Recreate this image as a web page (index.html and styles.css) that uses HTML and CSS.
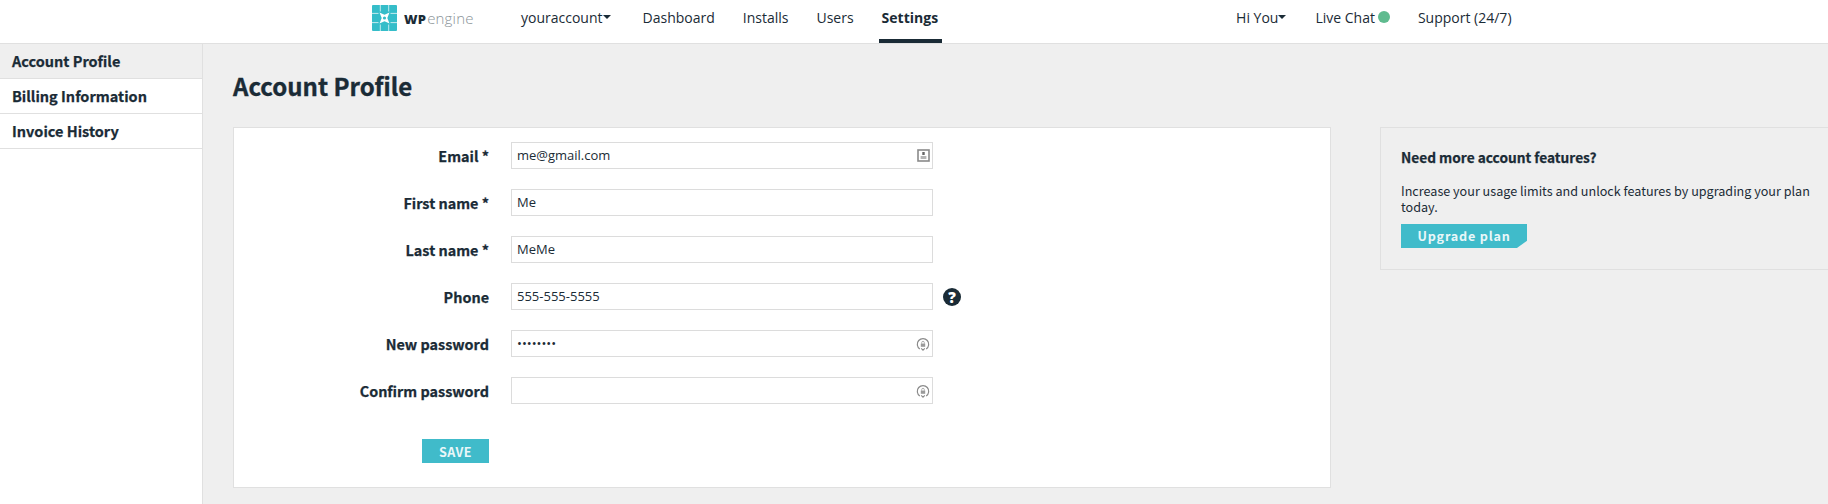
FILE: index.html
```html
<!DOCTYPE html>
<html lang="en">
<head>
<meta charset="utf-8">
<title>Account Profile</title>
<link rel="stylesheet" href="styles.css">
</head>
<body>
<header class="topbar">
  <a class="logo" href="#">
    <svg class="logo-mark" viewBox="0 0 25 26" width="25" height="26">
      <rect x="0" y="0" width="25" height="26" rx="1" fill="#35bdc9"/>
      <path d="M8.300 0v6.500M16.700 0v6.500M8.300 19.500v6.500M16.700 19.500v6.500M0 8.400h6.500M18.500 8.400h6.500M0 17.600h6.500M18.500 17.600h6.500" stroke="#c4ebef" stroke-width="1"/>
      <path d="M7.500 7.500l5 2.200 5-2.200-2.200 5.500 2.200 5.500-5-2.200-5 2.200 2.200-5.500z" fill="#fff"/>
      <circle cx="12.500" cy="13" r="1.600" fill="#35bdc9"/>
    </svg>
    <span class="logo-text"><b>WP</b>engine</span>
  </a>
  <nav class="nav-main">
    <a href="#" class="nav-link">youraccount<i class="caret"></i></a>
    <a href="#" class="nav-link">Dashboard</a>
    <a href="#" class="nav-link">Installs</a>
    <a href="#" class="nav-link">Users</a>
    <a href="#" class="nav-link active">Settings</a>
  </nav>
  <nav class="nav-side">
    <a href="#" class="nav-link">Hi You<i class="caret"></i></a>
    <a href="#" class="nav-link">Live Chat<i class="dot"></i></a>
    <a href="#" class="nav-link">Support (24/7)</a>
  </nav>
</header>
<div class="layout">
  <aside class="sidebar">
    <a href="#" class="side-item current">Account Profile</a>
    <a href="#" class="side-item">Billing Information</a>
    <a href="#" class="side-item">Invoice History</a>
  </aside>
  <main class="content">
    <h1 class="page-title">Account Profile</h1>
    <div class="columns">
      <form class="card">
        <div class="row">
          <label class="label">Email *</label>
          <div class="field">
            <input class="input" type="text" value="me@gmail.com">
            <svg class="field-icon" viewBox="0 0 13 13" width="13" height="13"><rect x="1" y="1" width="11" height="11" fill="#fff" stroke="#8a8a8a" stroke-width="1.600"/><rect x="5.300" y="3" width="2.400" height="3" fill="#666"/><rect x="3.600" y="7" width="5.800" height="3" fill="#b5b5b5"/></svg>
          </div>
        </div>
        <div class="row">
          <label class="label">First name *</label>
          <div class="field"><input class="input" type="text" value="Me"></div>
        </div>
        <div class="row">
          <label class="label">Last name *</label>
          <div class="field"><input class="input" type="text" value="MeMe"></div>
        </div>
        <div class="row">
          <label class="label">Phone</label>
          <div class="field"><input class="input" type="text" value="555-555-5555"></div>
          <span class="help">?</span>
        </div>
        <div class="row">
          <label class="label">New password</label>
          <div class="field">
            <input class="input" type="password" value="12345678">
            <svg class="field-icon" viewBox="0 0 14 14" width="14" height="14"><path d="M3.800 12A5.700 5.700 0 1 1 10.200 12" fill="none" stroke="#8a8a8a" stroke-width="1.200"/><path d="M5.200 11.400l1.800 1.800 1.800-1.800" fill="none" stroke="#8a8a8a" stroke-width="1.100"/><rect x="4.800" y="6.600" width="4.400" height="3.200" fill="#9a9a9a"/><path d="M5.700 6.800V5.600a1.300 1.300 0 0 1 2.600 0v1.200" fill="none" stroke="#a5a5a5" stroke-width=".9"/></svg>
          </div>
        </div>
        <div class="row">
          <label class="label">Confirm password</label>
          <div class="field">
            <input class="input" type="password">
            <svg class="field-icon" viewBox="0 0 14 14" width="14" height="14"><path d="M3.800 12A5.700 5.700 0 1 1 10.200 12" fill="none" stroke="#8a8a8a" stroke-width="1.200"/><path d="M5.200 11.400l1.800 1.800 1.800-1.800" fill="none" stroke="#8a8a8a" stroke-width="1.100"/><rect x="4.800" y="6.600" width="4.400" height="3.200" fill="#9a9a9a"/><path d="M5.700 6.800V5.600a1.300 1.300 0 0 1 2.600 0v1.200" fill="none" stroke="#a5a5a5" stroke-width=".9"/></svg>
          </div>
        </div>
        <div class="actions">
          <button class="save" type="button">SAVE</button>
        </div>
      </form>
      <section class="promo">
        <h2 class="promo-title">Need more account features?</h2>
        <p class="promo-text">Increase your usage limits and unlock features by upgrading your plan today.</p>
        <a href="#" class="upgrade">Upgrade plan</a>
      </section>
    </div>
  </main>
</div>
</body>
</html>
```
FILE: styles.css
```css
* { box-sizing: border-box; }
html, body { margin: 0; height: 100%; overflow: hidden; }
body {
  font-family: "Open Sans", sans-serif;
  color: #1a2b36;
  background: #efefef;
  display: flex;
  flex-direction: column;
}
a { color: inherit; text-decoration: none; }

.topbar {
  height: 44px;
  flex: none;
  background: #fff;
  border-bottom: 1px solid #e0e0e0;
  display: flex;
  align-items: stretch;
  padding-left: 372px;
}
.logo { display: flex; align-items: center; width: 149px; height: 36px; }
.logo-mark { flex: none; }
.logo-text {
  margin-left: 7px;
  font: 300 15px "Open Sans", sans-serif;
  color: #8b9499;
  letter-spacing: .2px;
}
.logo-text b { font-weight: 800; color: #1a2b36; font-size: 13px; margin-right: 1px; }

.nav-main, .nav-side { display: flex; height: 43px; }
.nav-main { gap: 28px; }
.nav-side { margin-left: 298px; gap: 28px; }
.nav-link {
  display: flex;
  align-items: center;
  height: 43px;
  padding: 0 0 9px;
  font-size: 14px;
  position: relative;
}
.nav-link.active { font-weight: 700; }
.nav-link.active::after {
  content: "";
  position: absolute;
  left: -3px;
  right: -4px;
  bottom: 0;
  height: 4px;
  background: #1a2b36;
}
.caret {
  width: 0; height: 0;
  margin-right: 1px;
  border-left: 4px solid transparent;
  border-right: 4px solid transparent;
  border-top: 4px solid #1a2b36;
}
.nav-main .caret { margin-right: 4px; }
.dot {
  width: 12px; height: 12px;
  margin-left: 3px;
  border-radius: 50%;
  background: #5fbb8f;
}

.layout { flex: 1; display: flex; min-height: 0; }
.sidebar {
  width: 203px;
  flex: none;
  background: #fff;
  border-right: 1px solid #e0e0e0;
}
.side-item {
  display: flex;
  align-items: center;
  height: 35px;
  padding: 0 0 1px 12px;
  font: 700 14.5px "Noto Sans CJK SC", "Source Sans Pro", sans-serif;
  -webkit-text-stroke: .25px currentColor;
  border-bottom: 1px solid #e0e0e0;
}
.side-item.current { background: #efefef; }

.content { flex: 1; min-width: 0; padding: 0 0 0 30px; }
.page-title {
  margin: 0;
  height: 83px;
  padding-top: 25px;
  font: 700 24px/34px "Noto Sans CJK SC", "Source Sans Pro", sans-serif;
  -webkit-text-stroke: .35px currentColor;
}
.columns { display: flex; align-items: flex-start; }
.card {
  width: 1098px;
  height: 361px;
  flex: none;
  background: #fff;
  border: 1px solid #e0e0e0;
  padding: 14px 0 0;
}
.row { display: flex; align-items: center; height: 47px; padding-bottom: 20px; }
.label {
  width: 255px;
  text-align: right;
  font: 700 14.4px "Noto Sans CJK SC", "Source Sans Pro", sans-serif;
  -webkit-text-stroke: .25px currentColor;
}
.field { position: relative; width: 422px; margin-left: 22px; }
.input {
  display: block;
  width: 100%;
  height: 27px;
  border: 1px solid #dcdcdc;
  padding: 0 5px 1px;
  font: 400 13px "Open Sans", sans-serif;
  color: #1a2b36;
  background: #fff;
  outline: none;
}
.field-icon { position: absolute; right: 3px; top: 7px; }
.help {
  width: 18px; height: 18px;
  margin-left: 10px;
  border-radius: 50%;
  background: #1a2b36;
  color: #fff;
  font: 800 15px/18px "Open Sans", sans-serif;
  text-align: center;
}
.actions { padding-top: 15px; padding-left: 188px; }
.save {
  display: block;
  width: 67px;
  height: 24px;
  padding: 0;
  border: 0;
  background: #40bbca;
  color: #eaf7f9;
  font: 700 12.6px "Noto Sans CJK SC", "Source Sans Pro", sans-serif;
  letter-spacing: .5px;
}

.promo {
  flex: 1;
  margin-left: 49px;
  height: 143px;
  border: 1px solid #e0e0e0;
  border-right: 0;
  padding: 18px 20px 0 20px;
}
.promo-title {
  margin: 0;
  font: 700 13.7px/22px "Noto Sans CJK SC", "Source Sans Pro", sans-serif;
  -webkit-text-stroke: .25px currentColor;
}
.promo-text { margin: 15px 0 0; font: 400 12.6px/16px "Noto Sans CJK SC", "Source Sans Pro", sans-serif; width: 420px; }
.upgrade {
  display: block;
  margin-top: 9px;
  width: 126px;
  height: 24px;
  background: #40bbca;
  color: #eaf7f9;
  font: 700 12.6px/23px "Noto Sans CJK SC", "Source Sans Pro", sans-serif;
  letter-spacing: .8px;
  text-align: center;
  clip-path: polygon(0 0, 100% 0, 100% 70%, 92% 100%, 0 100%);
}
```
